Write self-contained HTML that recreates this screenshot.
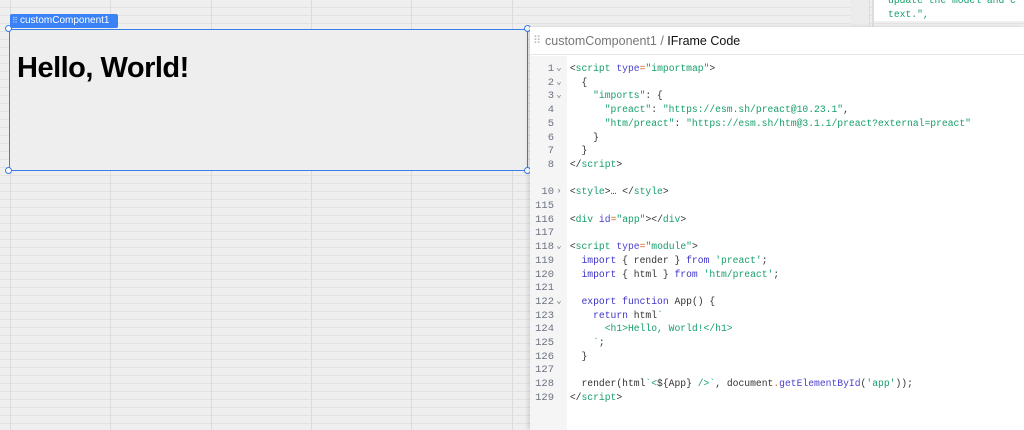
<!DOCTYPE html>
<html><head><meta charset="utf-8"><style>
*{margin:0;padding:0;box-sizing:border-box}
body{width:1024px;height:430px;overflow:hidden;position:relative;font-family:"Liberation Sans",sans-serif;
background-color:#efefef;
background-image:repeating-linear-gradient(180deg,#efefef 0,#efefef 7px,#e2e2e2 7px,#e2e2e2 8px);}
.v{position:absolute;top:0;width:1px;height:430px;background:#dcdcdc}
#comp{position:absolute;left:9px;top:29px;width:519px;height:142px;background:#eeeeee;border:1.5px solid #3b7de8}
.h{position:absolute;width:7px;height:7px;border-radius:50%;background:#fff;border:1.5px solid #3b7de8}
#lab{position:absolute;left:10px;top:14px;width:108px;height:14px;background:#3b82f6;border-radius:2px;color:#fff;font-size:10px;line-height:14px;padding-left:10px;white-space:nowrap;overflow:hidden}
#lab:before{content:"⠿";position:absolute;left:2px;top:0;font-size:8px;opacity:.7}
h1{position:absolute;left:17px;top:52px;font-size:29px;font-weight:bold;letter-spacing:-0.5px;color:#000}
#panel{position:absolute;left:530px;top:27px;width:494px;height:403px;background:#fff;box-shadow:-2px 0 4px rgba(0,0,0,.12)}
#hdr{height:28px;border-bottom:1px solid #e6e6e6;font-size:12.5px;line-height:28px;padding-left:15px;color:#777;position:relative}
#hdr:before{content:"⠿";position:absolute;left:3px;color:#bbb;font-size:11px}
#hdr b{color:#111;font-weight:normal}
#gut{position:absolute;left:0;top:29px;width:37px;bottom:0;background:#f5f5f5}
pre{position:absolute;left:0;top:35px;font-family:"Liberation Mono",monospace;font-size:9.7px;line-height:13.7px;color:#333}
.n{display:inline-block;width:24px;text-align:right;color:#6b7280;font-size:10.5px;line-height:13.7px;height:13.7px;vertical-align:top;position:relative;top:1px}
.f{display:inline-block;width:10px;text-align:center;color:#777;font-size:9px;line-height:13.7px;height:13.7px;vertical-align:top}
.t{color:#17a06b}.a{color:#4a3fcf}.s{color:#17a06b}.e{color:#d2691e}.k{color:#3d33c8}
#tr{position:absolute;left:850px;top:0;width:174px;height:27px}
</style></head><body>
<div class="v" style="left:10px"></div><div class="v" style="left:110px"></div><div class="v" style="left:211px"></div><div class="v" style="left:311px"></div><div class="v" style="left:411px"></div><div class="v" style="left:512px"></div>
<div id="tr"><div style="position:absolute;left:0;top:0;width:20px;height:27px;background:#ececec;border-right:1px solid #ddd"></div><div style="position:absolute;left:22px;top:0;width:2px;height:27px;background:#ddd"></div><div style="position:absolute;left:24px;top:0;right:0;height:27px;background:#fff;font-family:'Liberation Mono',monospace;font-size:9.7px;line-height:13.5px;color:#17a06b;padding-left:14px;margin-top:-6px">update the model and c<br>text.",</div></div>
<div id="comp"></div>
<div class="h" style="left:5px;top:25px"></div><div class="h" style="left:524px;top:25px"></div><div class="h" style="left:5px;top:167px"></div><div class="h" style="left:524px;top:167px"></div>
<div id="lab">customComponent1</div>
<h1>Hello, World!</h1>
<div id="panel">
<div id="hdr">customComponent1 / <b>IFrame Code</b></div>
<div id="gut"></div>
<pre><span class="n">1</span><span class="f">⌄</span> &lt;<span class="t">script</span> <span class="a">type</span><span class="e">=</span><span class="s">"importmap"</span>&gt;
<span class="n">2</span><span class="f">⌄</span>   {
<span class="n">3</span><span class="f">⌄</span>     <span class="s">"imports"</span>: {
<span class="n">4</span><span class="f"></span>       <span class="s">"preact"</span>: <span class="s">"https://esm.sh/preact@10.23.1"</span>,
<span class="n">5</span><span class="f"></span>       <span class="s">"htm/preact"</span>: <span class="s">"https://esm.sh/htm@3.1.1/preact?external=preact"</span>
<span class="n">6</span><span class="f"></span>     }
<span class="n">7</span><span class="f"></span>   }
<span class="n">8</span><span class="f"></span> &lt;/<span class="t">script</span>&gt;
<span class="n"></span><span class="f"></span>
<span class="n">10</span><span class="f">›</span> &lt;<span class="t">style</span>&gt;… &lt;/<span class="t">style</span>&gt;
<span class="n">115</span><span class="f"></span>
<span class="n">116</span><span class="f"></span> &lt;<span class="t">div</span> <span class="a">id</span><span class="e">=</span><span class="s">"app"</span>&gt;&lt;/<span class="t">div</span>&gt;
<span class="n">117</span><span class="f"></span>
<span class="n">118</span><span class="f">⌄</span> &lt;<span class="t">script</span> <span class="a">type</span><span class="e">=</span><span class="s">"module"</span>&gt;
<span class="n">119</span><span class="f"></span>   <span class="k">import</span> { render } <span class="k">from</span> <span class="s">'preact'</span>;
<span class="n">120</span><span class="f"></span>   <span class="k">import</span> { html } <span class="k">from</span> <span class="s">'htm/preact'</span>;
<span class="n">121</span><span class="f"></span>
<span class="n">122</span><span class="f">⌄</span>   <span class="k">export</span> <span class="k">function</span> App() {
<span class="n">123</span><span class="f"></span>     <span class="k">return</span> html<span class="s">`</span>
<span class="n">124</span><span class="f"></span>       <span class="s">&lt;h1&gt;Hello, World!&lt;/h1&gt;</span>
<span class="n">125</span><span class="f"></span>     <span class="s">`</span>;
<span class="n">126</span><span class="f"></span>   }
<span class="n">127</span><span class="f"></span>
<span class="n">128</span><span class="f"></span>   render(html<span class="s">`&lt;</span>${App} <span class="s">/&gt;`</span>, document<span class="e">.</span><span class="a">getElementById</span>(<span class="s">'app'</span>));
<span class="n">129</span><span class="f"></span> &lt;/<span class="t">script</span>&gt;</pre>
</div>
</body></html>
